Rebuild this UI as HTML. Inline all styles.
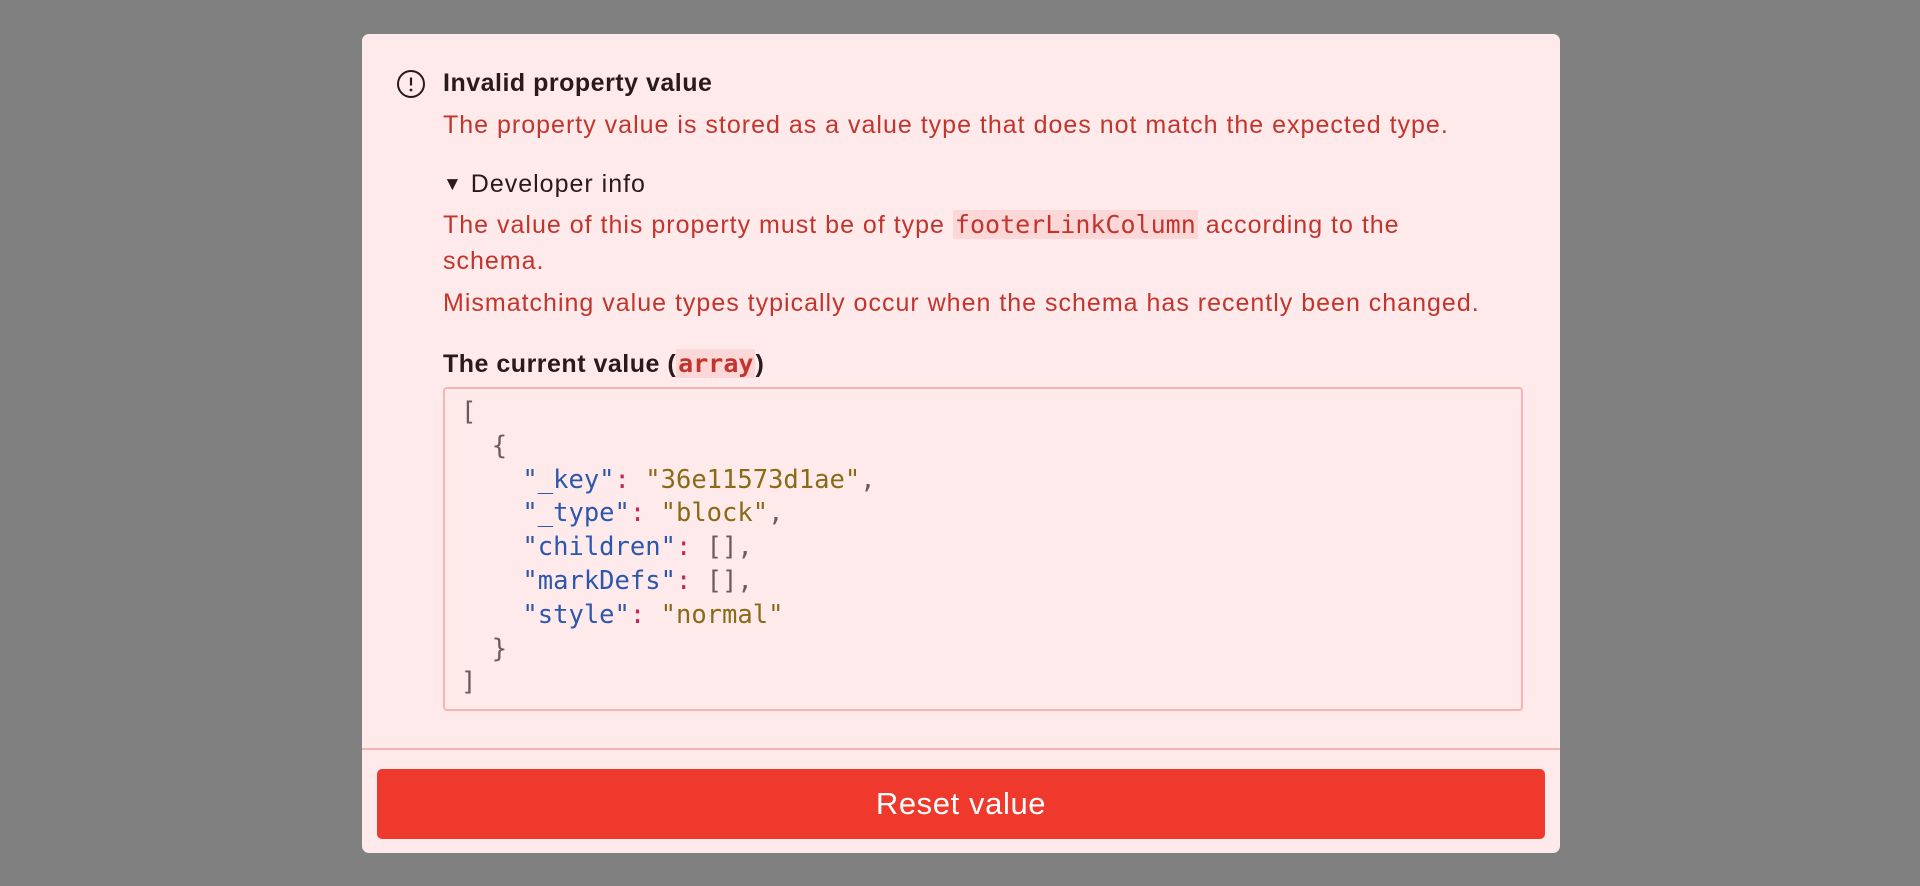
<!DOCTYPE html>
<html><head><meta charset="utf-8"><style>
html,body{margin:0;padding:0;width:1920px;height:886px;background:#808080;overflow:hidden}
.card{position:absolute;left:362px;top:34px;width:1198px;height:819px;background:#feeaea;border-radius:7px;font-family:"Liberation Sans",sans-serif}
.t{position:absolute;left:81px;white-space:nowrap}
.title{font-size:25px;font-weight:bold;color:#2a1a1a;letter-spacing:0.5px}
.red{font-size:25px;color:#c2342c;letter-spacing:1px}
code{font-family:"DejaVu Sans Mono","Liberation Mono",monospace;font-size:25px;letter-spacing:0;background:#fbd7d7;padding:0 2px;border-radius:2px}
.box{position:absolute;left:81px;top:353px;width:1076px;height:320px;border:2px solid #f5b4b4;border-radius:4px}
pre{margin:0;position:absolute;left:16px;top:7px;font-family:"DejaVu Sans Mono","Liberation Mono",monospace;font-size:25.5px;line-height:33.8px;color:#6b5b5b}
.k{color:#2d57ad}.s{color:#8a6a16}.p{color:#c5245e}
.div{position:absolute;left:0;right:0;top:714px;height:2px;background:#f5b4b4}
.btn{position:absolute;left:15px;top:735px;width:1168px;height:70px;background:#ee392c;border-radius:5px;color:#fff;font-size:31px;letter-spacing:0.6px;text-align:center;line-height:70px}
</style></head><body>
<div class="card">
<svg style="position:absolute;left:34px;top:35px" width="30" height="30" viewBox="0 0 30 30"><circle cx="15" cy="15" r="13" fill="none" stroke="#2a1a1a" stroke-width="2"/><line x1="15" y1="8.5" x2="15" y2="16.5" stroke="#2a1a1a" stroke-width="2.2"/><circle cx="15" cy="21" r="1.4" fill="#2a1a1a"/></svg>
<div class="t title" style="top:35px">Invalid property value</div>
<div class="t red" style="top:77px">The property value is stored as a value type that does not match the expected type.</div>
<div class="t title" style="top:136px;font-weight:normal;letter-spacing:1px"><span style="font-size:19px;position:relative;top:-2px">▼</span> Developer info</div>
<div class="t red" style="top:176px">The value of this property must be of type <code style="color:#c2342c">footerLinkColumn</code> according to the</div>
<div class="t red" style="top:213px">schema.</div>
<div class="t red" style="top:255px">Mismatching value types typically occur when the schema has recently been changed.</div>
<div class="t title" style="top:315px">The current value (<code style="color:#c2342c;font-weight:bold">array</code>)</div>
<div class="box"><pre>[
  {
    <span class="k">"_key"</span><span class="p">:</span> <span class="s">"36e11573d1ae"</span>,
    <span class="k">"_type"</span><span class="p">:</span> <span class="s">"block"</span>,
    <span class="k">"children"</span><span class="p">:</span> [],
    <span class="k">"markDefs"</span><span class="p">:</span> [],
    <span class="k">"style"</span><span class="p">:</span> <span class="s">"normal"</span>
  }
]</pre></div>
<div class="div"></div>
<div class="btn">Reset value</div>
</div>
</body></html>
